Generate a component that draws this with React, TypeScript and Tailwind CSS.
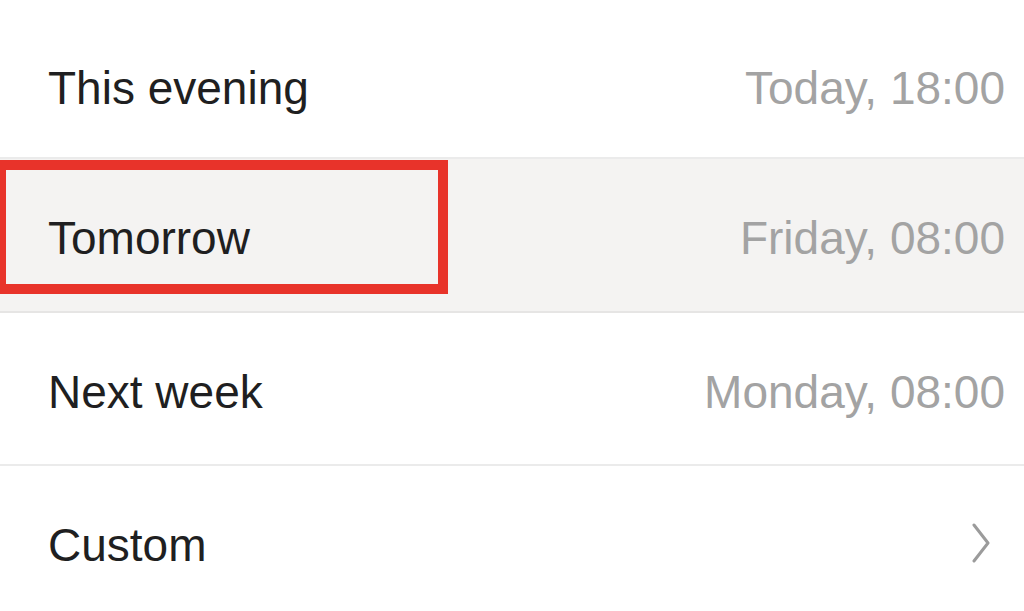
import React from 'react';

const rows = [
  { id: 1, label: 'This evening', value: 'Today, 18:00', h: 'h-[159px] pt-[12px]' },
  { id: 2, label: 'Tomorrow', value: 'Friday, 08:00', h: 'h-[154px]', active: true },
  { id: 3, label: 'Next week', value: 'Monday, 08:00', h: 'h-[153px]' },
];

const Chevron = () => (
  <svg width="18" height="40" viewBox="0 0 18 40" fill="none">
    <polyline points="2,2 16,20 2,38" stroke="#9b9b9b" strokeWidth="3" strokeLinecap="round" strokeLinejoin="round" />
  </svg>
);

export default function App() {
  return (
    <div
      className="w-[1024px] h-[611px] overflow-hidden bg-white flex flex-col"
      style={{ fontFamily: '"Liberation Sans", Arial, sans-serif' }}
    >
      {rows.map(row => (
        <div
          key={row.id}
          className={`relative ${row.h} shrink-0 flex items-center justify-between pl-[48px] pr-[19px] border-b-2 border-[#ebebeb] ${row.active ? 'bg-[#f4f3f2] border-b-[#e6e5e4]' : ''}`}
        >
          <span className="text-[46px] text-[#1f1f21] leading-none pt-[6px]">{row.label}</span>
          <span className="text-[46px] text-[#a3a3a3] leading-none pt-[6px]">{row.value}</span>
          {row.active && (
            <div className="absolute left-[-4px] top-[1px] w-[452px] h-[134px] border-[10px] border-[#e8332a]" />
          )}
        </div>
      ))}
      <div className="h-[154px] shrink-0 flex items-center justify-between pl-[48px] pr-[34px]">
        <span className="text-[46px] text-[#1f1f21] leading-none pt-[4px]">Custom</span>
        <Chevron />
      </div>
    </div>
  );
}
